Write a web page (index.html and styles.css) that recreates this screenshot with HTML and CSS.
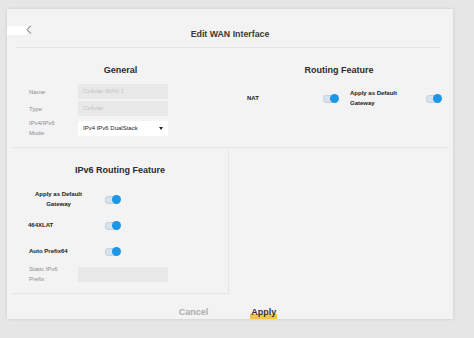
FILE: index.html
```html
<!DOCTYPE html>
<html lang="en">
<head>
<meta charset="utf-8">
<title>Edit WAN Interface</title>
<link rel="stylesheet" href="styles.css">
</head>
<body>
<div class="card">
  <header class="head">
    <div class="back">
      <span class="back-pad"></span>
      <svg class="chev" width="6" height="10" viewBox="0 0 6 10"><polyline points="4.8,0.8 1.2,4.6 4.8,8.6" fill="none" stroke="#555" stroke-width="0.9"/></svg>
    </div>
    <h1 class="title">Edit WAN Interface</h1>
    <span></span>
  </header>
  <div class="rule"></div>
  <div class="panels">
    <section class="cell cell--top">
      <h2 class="sec-title">General</h2>
      <div class="fields">
        <div class="field"><span class="f-label">Name</span><span class="input input--off">Cellular WAN 1</span></div>
        <div class="field"><span class="f-label">Type</span><span class="input input--off">Cellular</span></div>
        <div class="field"><span class="f-label">IPv4/IPv6<br>Mode</span><span class="input input--select">IPv4 IPv6 DualStack<svg class="caret" width="4" height="3" viewBox="0 0 4 3"><polygon points="0,0 4,0 2,3" fill="#222"/></svg></span></div>
      </div>
    </section>
    <section class="cell cell--top">
      <h2 class="sec-title">Routing Feature</h2>
      <div class="pairs">
        <div class="pair"><span class="t-label">NAT</span><span class="toggle"></span></div>
        <div class="pair"><span class="t-label">Apply as Default<br>Gateway</span><span class="toggle"></span></div>
      </div>
    </section>
    <section class="cell cell--bl">
      <h2 class="sec-title">IPv6 Routing Feature</h2>
      <div class="rows">
        <div class="trow"><span class="t-label t-label--fixed t-label--center">Apply as Default<br>Gateway</span><span class="toggle toggle--row"></span></div>
        <div class="trow"><span class="t-label t-label--fixed">464XLAT</span><span class="toggle toggle--row"></span></div>
        <div class="trow"><span class="t-label t-label--fixed t-label--in">Auto Prefix64</span><span class="toggle toggle--row"></span></div>
        <div class="field field--static"><span class="f-label">Static IPv6<br>Prefix</span><span class="input input--off"></span></div>
      </div>
    </section>
    <section class="cell cell--br"></section>
  </div>
  <footer class="actions">
    <span class="btn btn--cancel">Cancel</span>
    <span class="btn btn--apply">Apply</span>
  </footer>
</div>
</body>
</html>
```
FILE: styles.css
```css
* { box-sizing: border-box; }
html, body { margin: 0; padding: 0; }
body {
  width: 474px;
  height: 338px;
  overflow: hidden;
  background: #e6e6e6;
  font-family: "Liberation Sans", Arial, sans-serif;
  color: #333;
}
.card {
  margin: 9px 0 0 7px;
  width: 446px;
  height: 310px;
  background: #f3f3f3;
  box-shadow: 0 0 3px rgba(0, 0, 0, 0.14);
  display: flex;
  flex-direction: column;
}
.head {
  height: 38px;
  padding-top: 12px;
  display: grid;
  grid-template-columns: 1fr auto 1fr;
  align-items: center;
}
.back {
  align-self: start;
  margin-top: 4px;
  display: flex;
  align-items: center;
}
.back-pad {
  width: 20px;
  height: 9px;
  background: #ffffff;
}
.chev { display: block; margin-left: -1px; }
.title {
  margin: 0;
  font-size: 8.8px;
  line-height: 12px;
  font-weight: 700;
  color: #383838;
}
.rule {
  height: 1px;
  margin: 0 13px 0 9px;
  background: #e6e6e6;
}
.panels {
  margin: 0 4px 0 5px;
  display: grid;
  grid-template-columns: 217px 220px;
  grid-template-rows: 100px 146px;
}
.cell { padding-top: 16px; }
.cell--top { border-bottom: 1px solid #e6e6e6; }
.cell--bl {
  border-right: 1px solid #e6e6e6;
  border-bottom: 1px solid #e6e6e6;
}
.sec-title {
  margin: 0;
  font-size: 9px;
  line-height: 12px;
  font-weight: 700;
  text-align: center;
  color: #2b2b2b;
}
.fields {
  margin-top: 8px;
  padding-left: 17px;
  display: flex;
  flex-direction: column;
  gap: 2px;
}
.field {
  display: flex;
  align-items: center;
  min-height: 15px;
}
.f-label {
  width: 49px;
  font-size: 6px;
  line-height: 10px;
  color: #8c8c8c;
}
.input {
  width: 90px;
  height: 15px;
  padding-left: 5px;
  font-size: 6px;
  line-height: 15px;
  display: flex;
  align-items: center;
}
.input--off {
  background: #e8e8e8;
  color: #c2c2c2;
}
.input--select {
  background: #ffffff;
  color: #222;
  justify-content: space-between;
  padding-right: 5px;
}
.caret { display: block; }
.pairs {
  margin-top: 12px;
  padding-left: 18px;
  display: grid;
  grid-template-columns: 92px 92px;
  column-gap: 11px;
}
.pair {
  height: 20px;
  display: flex;
  align-items: center;
  justify-content: space-between;
}
.t-label {
  font-size: 6px;
  line-height: 10px;
  font-weight: 700;
  color: #222;
}
.rows {
  margin-top: 10px;
  display: flex;
  flex-direction: column;
}
.trow {
  height: 26px;
  padding-left: 16px;
  display: flex;
  align-items: center;
}
.t-label--fixed { width: 61px; }
.t-label--center { text-align: center; }
.t-label--in { padding-left: 1px; }
.field--static {
  min-height: 20px;
  padding-left: 17px;
}
.toggle {
  position: relative;
  width: 16px;
  height: 9px;
  flex: none;
}
.toggle--row { margin-left: 16px; }
.toggle::before {
  content: "";
  position: absolute;
  left: 0;
  top: 1.5px;
  width: 12px;
  height: 6px;
  border-radius: 3px;
  background: #d5e3ee;
  border: 1px solid #c3d2de;
}
.toggle::after {
  content: "";
  position: absolute;
  right: 0;
  top: 0;
  width: 9px;
  height: 9px;
  border-radius: 50%;
  background: #1b97e8;
}
.actions {
  flex: 1;
  padding-top: 12px;
  padding-right: 4px;
  display: flex;
  justify-content: center;
  gap: 42px;
}
.btn {
  font-size: 9px;
  line-height: 12px;
  font-weight: 700;
}
.btn--cancel { color: #ababab; }
.btn--apply {
  color: #333;
  padding: 0 1px;
  background: linear-gradient(to bottom, transparent 8px, #f5c542 8px);
}
```
